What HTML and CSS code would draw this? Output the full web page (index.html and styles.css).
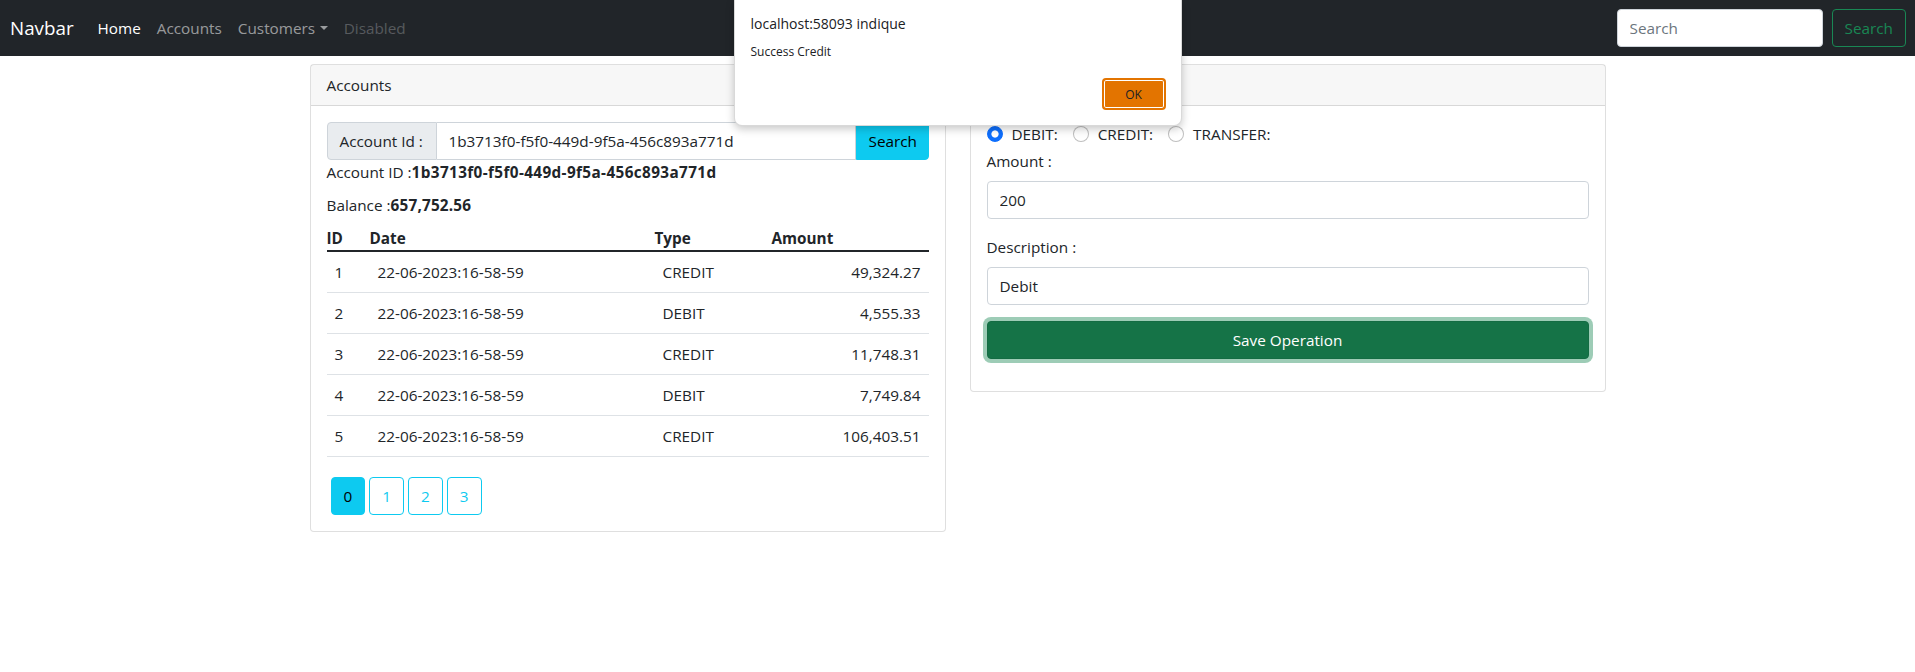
FILE: index.html
```html
<!DOCTYPE html>
<html lang="en">
<head>
<meta charset="utf-8">
<title>Accounts</title>
<link rel="stylesheet" href="styles.css">
</head>
<body>
<nav class="navbar">
  <div class="nav-inner">
    <a class="brand" href="#">Navbar</a>
    <ul class="nav-links">
      <li><a class="nav-link active" href="#">Home</a></li>
      <li><a class="nav-link" href="#">Accounts</a></li>
      <li><a class="nav-link dropdown-toggle" href="#">Customers</a></li>
      <li><a class="nav-link disabled" href="#">Disabled</a></li>
    </ul>
    <form class="nav-search">
      <input class="nav-input" type="search" placeholder="Search">
      <button class="btn-outline-success" type="button">Search</button>
    </form>
  </div>
</nav>

<div class="container">
  <div class="row">
    <div class="col">
      <div class="card">
        <div class="card-header">Accounts</div>
        <div class="card-body">
          <div class="input-group">
            <span class="input-group-text">Account Id :</span>
            <input class="group-input" type="text" value="1b3713f0-f5f0-449d-9f5a-456c893a771d">
            <button class="btn-info group-btn" type="button">Search</button>
          </div>
          <div class="info-line">Account ID :<strong class="id-strong">1b3713f0-f5f0-449d-9f5a-456c893a771d</strong></div>
          <div class="info-line balance">Balance :<strong class="bal-strong">657,752.56</strong></div>
          <table class="tx-table">
            <colgroup>
              <col class="c-id"><col class="c-date"><col class="c-type"><col class="c-amount">
            </colgroup>
            <thead>
              <tr><th>ID</th><th>Date</th><th>Type</th><th>Amount</th></tr>
            </thead>
            <tbody>
              <tr><td>1</td><td>22-06-2023:16-58-59</td><td>CREDIT</td><td class="num">49,324.27</td></tr>
              <tr><td>2</td><td>22-06-2023:16-58-59</td><td>DEBIT</td><td class="num">4,555.33</td></tr>
              <tr><td>3</td><td>22-06-2023:16-58-59</td><td>CREDIT</td><td class="num">11,748.31</td></tr>
              <tr><td>4</td><td>22-06-2023:16-58-59</td><td>DEBIT</td><td class="num">7,749.84</td></tr>
              <tr><td>5</td><td>22-06-2023:16-58-59</td><td>CREDIT</td><td class="num">106,403.51</td></tr>
            </tbody>
          </table>
          <div class="pager">
            <button class="page-btn current" type="button">0</button><button class="page-btn" type="button">1</button><button class="page-btn" type="button">2</button><button class="page-btn" type="button">3</button>
          </div>
        </div>
      </div>
    </div>
    <div class="col">
      <div class="card">
        <div class="card-header">Operations</div>
        <div class="card-body">
          <div class="radio-row">
            <input class="radio" type="radio" name="op" checked><label class="radio-label">DEBIT:</label>
            <input class="radio" type="radio" name="op"><label class="radio-label">CREDIT:</label>
            <input class="radio" type="radio" name="op"><label class="radio-label">TRANSFER:</label>
          </div>
          <div class="field">
            <label class="field-label">Amount :</label>
            <input class="form-control" type="text" value="200">
          </div>
          <div class="field">
            <label class="field-label">Description :</label>
            <input class="form-control" type="text" value="Debit">
          </div>
          <button class="btn-save" type="button">Save Operation</button>
        </div>
      </div>
    </div>
  </div>
</div>

<div class="dialog">
  <div class="dialog-title">localhost:58093 indique</div>
  <div class="dialog-msg">Success Credit</div>
  <div class="dialog-actions">
    <button class="dialog-ok" type="button">OK</button>
  </div>
</div>
</body>
</html>
```

FILE: styles.css
```css
* { box-sizing: border-box; }

body {
  margin: 0;
  font-family: "Open Sans", "Noto Sans", sans-serif;
  font-size: 15.3px;
  line-height: 24px;
  color: #212529;
  background: #fff;
}

a { text-decoration: none; }

/* Navbar */
.navbar {
  background: #212529;
  padding: 8px 0;
  height: 56px;
}
.nav-inner {
  display: flex;
  align-items: center;
  padding: 0 9px 0 10px;
  height: 40px;
}
.brand {
  color: #fff;
  font-size: 18.8px;
  line-height: 30px;
  padding: 5px 0;
  margin-right: 16px;
}
.nav-links {
  display: flex;
  list-style: none;
  margin: 0;
  padding: 0;
}
.nav-link {
  display: block;
  padding: 8px;
  color: rgba(255,255,255,.55);
}
.nav-link.active { color: #fff; }
.nav-link.disabled { color: rgba(255,255,255,.25); }
.dropdown-toggle::after {
  content: "";
  display: inline-block;
  margin-left: .3em;
  vertical-align: .255em;
  border-top: .3em solid;
  border-left: .3em solid transparent;
  border-right: .3em solid transparent;
}
.nav-search {
  margin: 0 0 0 auto;
  display: flex;
  align-items: center;
}
.nav-input {
  width: 206px;
  height: 38px;
  padding: 6px 12px;
  border: 1px solid #ced4da;
  border-radius: 4px;
  font: inherit;
  color: #212529;
  background: #fff;
  margin-right: 9px;
}
.nav-input::placeholder { color: #6c757d; }
.btn-outline-success {
  height: 38px;
  padding: 6px 12px;
  border: 1px solid #198754;
  border-radius: 4px;
  background: transparent;
  color: #198754;
  font: inherit;
}

/* Layout */
.container {
  width: 1320px;
  margin: 8px auto 0;
  padding: 0 12px;
}
.row {
  display: flex;
  align-items: flex-start;
  margin: 0 -12px;
}
.col {
  flex: 0 0 50%;
  padding: 0 12px;
}

/* Card */
.card {
  border: 1px solid rgba(0,0,0,.125);
  border-radius: 4px;
  background: #fff;
}
.card-header {
  padding: 8px 16px;
  background: rgba(0,0,0,.03);
  border-bottom: 1px solid rgba(0,0,0,.125);
}
.card-body {
  padding: 16px;
}

/* Input group */
.input-group {
  display: flex;
  height: 38px;
}
.input-group-text {
  display: flex;
  align-items: center;
  padding: 6px 12px;
  background: #e9ecef;
  border: 1px solid #ced4da;
  border-radius: 4px 0 0 4px;
  white-space: nowrap;
  width: 110px;
}
.group-input {
  flex: 1;
  min-width: 0;
  padding: 6px 12px;
  border: 1px solid #ced4da;
  border-left: 0;
  font: inherit;
  color: #212529;
}
.btn-info {
  background: #0dcaf0;
  border: 1px solid #0dcaf0;
  color: #000;
  font: inherit;
}
.group-btn {
  width: 73px;
  padding: 6px 12px;
  border-radius: 0 4px 4px 0;
}

.info-line { height: 24px; }
.balance { margin-top: 9px; }
.info-line strong { font-weight: 700; }
.id-strong { letter-spacing: .38px; }
.bal-strong { letter-spacing: .2px; }

/* Table */
.tx-table {
  width: 100%;
  margin-top: 9px;
  border-collapse: collapse;
  table-layout: fixed;
}
.c-id { width: 43px; }
.c-date { width: 285px; }
.c-type { width: 117px; }
.c-amount { width: 157px; }
.tx-table th {
  text-align: left;
  padding: 0;
  font-weight: 700;
  line-height: 24px;
  border-bottom: 2px solid #212529;
}
.tx-table td {
  padding: 8px;
  border-bottom: 1px solid #dee2e6;
  white-space: nowrap;
}
.tx-table td.num { text-align: right; }

/* Pager */
.pager {
  display: flex;
  margin-top: 20px;
}
.page-btn {
  height: 38px;
  margin-left: 4px;
  padding: 6px 12px;
  border: 1px solid #0dcaf0;
  border-radius: 4px;
  background: #fff;
  color: #0dcaf0;
  font: inherit;
}
.page-btn.current {
  background: #0dcaf0;
  color: #000;
}

/* Right form */
.radio-row {
  display: flex;
  align-items: center;
  height: 24px;
  margin-bottom: 3px;
}
.radio {
  appearance: none;
  -webkit-appearance: none;
  width: 16px;
  height: 16px;
  margin: 0 9px 0 0;
  border: 1px solid rgba(0,0,0,.25);
  border-radius: 50%;
  background: #fff;
}
.radio:checked {
  border-color: #0d6efd;
  background: radial-gradient(circle, #fff 0 3.2px, #0d6efd 4px);
}
.radio-label { margin-right: 15px; }
.field { margin-bottom: 16px; }
.field-label {
  display: block;
  margin-bottom: 8px;
}
.form-control {
  display: block;
  width: 100%;
  height: 38px;
  padding: 6px 12px;
  border: 1px solid #ced4da;
  border-radius: 4px;
  font: inherit;
  color: #212529;
  background: #fff;
}
.btn-save {
  display: block;
  width: 100%;
  height: 38px;
  margin-bottom: 16px;
  padding: 6px 12px;
  background: #157347;
  border: 1px solid #146c43;
  border-radius: 4px;
  color: #fff;
  font: inherit;
  box-shadow: 0 0 0 4px rgba(60,153,110,.5);
}

/* Alert dialog */
.dialog {
  position: absolute;
  top: 0;
  left: 50%;
  margin-left: -224px;
  width: 448px;
  height: 126px;
  background: #fff;
  border: 1px solid rgba(0,0,0,.15);
  border-top: 0;
  border-radius: 0 0 8px 8px;
  box-shadow: 0 3px 8px rgba(0,0,0,.22);
  padding: 14px 16px 0 16px;
  color: #202124;
}
.dialog-title {
  font-size: 14px;
  line-height: 20px;
}
.dialog-msg {
  margin-top: 9px;
  font-size: 12px;
  line-height: 18px;
}
.dialog-actions {
  display: flex;
  justify-content: flex-end;
  margin-top: 17px;
}
.dialog-ok {
  width: 64px;
  height: 32px;
  margin-right: -1px;
  background: #e37400;
  border: 2px solid #e37400;
  border-radius: 4px;
  box-shadow: inset 0 0 0 1px #fff;
  color: #202124;
  font-family: inherit;
  font-size: 12px;
}
```
